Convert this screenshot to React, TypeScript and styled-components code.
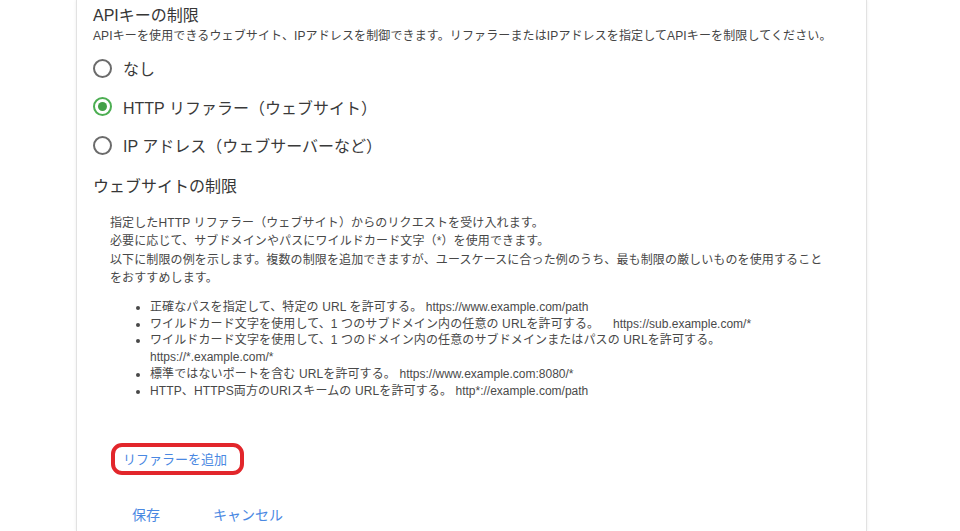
import React from "react";
import styled, { createGlobalStyle } from "styled-components";

const GlobalStyle = createGlobalStyle`
  html, body {
    margin: 0;
    padding: 0;
    background: #ffffff;
  }
  body {
    font-family: "Liberation Sans", Arial, "Noto Sans CJK JP", sans-serif;
    color: #333333;
  }
`;

const Page = styled.div`
  min-height: 100vh;
  padding-left: 76px;
`;

const Card = styled.section`
  box-sizing: border-box;
  width: 791px;
  min-height: 100vh;
  padding: 6px 16px 0 16px;
  background: #ffffff;
  border-left: 1px solid #e2e2e2;
  border-right: 1px solid #e2e2e2;
  box-shadow: 0 0 3px rgba(0, 0, 0, 0.08);
  display: flex;
  flex-direction: column;
`;

const Heading = styled.h2<{ $gap?: number }>`
  margin: ${(p) => p.$gap ?? 0}px 0 0 0;
  font-size: 16px;
  line-height: 20px;
  font-weight: normal;
  color: #363636;
`;

const Subtitle = styled.p`
  margin: 2px 0 0 0;
  font-size: 12px;
  line-height: 16px;
  letter-spacing: 0.12px;
  color: #444444;
  white-space: nowrap;
`;

const RadioGroup = styled.div`
  margin-top: 5px;
  display: flex;
  flex-direction: column;
`;

const RadioRow = styled.label`
  height: 38.5px;
  display: flex;
  align-items: center;
  gap: 11px;
  font-size: 16px;
  color: #3a3a3a;
  cursor: pointer;
`;

const RadioCircle = styled.span<{ $checked?: boolean }>`
  box-sizing: border-box;
  width: 19px;
  height: 19px;
  border-radius: 50%;
  border: 2px solid ${(p) => (p.$checked ? "#4cae52" : "#6b6b6b")};
  display: flex;
  align-items: center;
  justify-content: center;
  flex-shrink: 0;

  &::after {
    content: "";
    display: ${(p) => (p.$checked ? "block" : "none")};
    width: 9px;
    height: 9px;
    border-radius: 50%;
    background: #43a047;
  }
`;

const Description = styled.div`
  margin: 17px 0 0 17px;
  width: 716px;
  font-size: 12px;
  line-height: 18.6px;
  letter-spacing: 0.12px;
  color: #484848;
`;

const Examples = styled.ul`
  margin: 11px 0 0 0;
  padding-left: 40px;
  font-size: 12px;
  line-height: 16.8px;
  color: #484848;
  list-style: disc;
`;

const Url = styled.span`
  color: #4a4a4a;
  letter-spacing: 0;
`;

const Highlight = styled.span`
  margin: 43px 0 0 18px;
  align-self: flex-start;
  border: 4px solid #e2262b;
  border-radius: 11px;
  padding: 3px 13px 3px 8px;
`;

const LinkButton = styled.button<{ $size?: number }>`
  background: none;
  border: none;
  padding: 0;
  font-family: inherit;
  font-size: ${(p) => p.$size ?? 13}px;
  line-height: 17px;
  color: #4a88e2;
  cursor: pointer;
`;

const Actions = styled.div`
  margin: 31px 0 0 39px;
  display: flex;
  align-items: center;
  gap: 53px;
  height: 20px;
`;

const options = [
  { label: "なし", checked: false },
  { label: "HTTP リファラー（ウェブサイト）", checked: true },
  { label: "IP アドレス（ウェブサーバーなど）", checked: false },
];

export default function App() {
  return (
    <>
      <GlobalStyle />
      <Page>
        <Card>
          <Heading>APIキーの制限</Heading>
          <Subtitle>
            APIキーを使用できるウェブサイト、IPアドレスを制御できます。リファラーまたはIPアドレスを指定してAPIキーを制限してください。
          </Subtitle>
          <RadioGroup>
            {options.map((o) => (
              <RadioRow key={o.label}>
                <RadioCircle $checked={o.checked} />
                {o.label}
              </RadioRow>
            ))}
          </RadioGroup>
          <Heading $gap={12}>ウェブサイトの制限</Heading>
          <Description>
            指定したHTTP リファラー（ウェブサイト）からのリクエストを受け入れます。
            <br />
            必要に応じて、サブドメインやパスにワイルドカード文字（*）を使用できます。
            <br />
            以下に制限の例を示します。複数の制限を追加できますが、ユースケースに合った例のうち、最も制限の厳しいものを使用すること
            <br />
            をおすすめします。
            <Examples>
              <li>
                正確なパスを指定して、特定の URL を許可する。{" "}
                <Url>https://www.example.com/path</Url>
              </li>
              <li>
                ワイルドカード文字を使用して、1 つのサブドメイン内の任意の URLを許可する。
                {"\u00a0\u00a0\u00a0\u00a0"}
                <Url>https://sub.example.com/*</Url>
              </li>
              <li>
                ワイルドカード文字を使用して、1 つのドメイン内の任意のサブドメインまたはパスの URLを許可する。
                <br />
                <Url>https://*.example.com/*</Url>
              </li>
              <li>
                標準ではないポートを含む URLを許可する。{" "}
                <Url>https://www.example.com:8080/*</Url>
              </li>
              <li>
                HTTP、HTTPS両方のURIスキームの URLを許可する。{" "}
                <Url>http*://example.com/path</Url>
              </li>
            </Examples>
          </Description>
          <Highlight>
            <LinkButton>リファラーを追加</LinkButton>
          </Highlight>
          <Actions>
            <LinkButton $size={14}>保存</LinkButton>
            <LinkButton $size={14}>キャンセル</LinkButton>
          </Actions>
        </Card>
      </Page>
    </>
  );
}
